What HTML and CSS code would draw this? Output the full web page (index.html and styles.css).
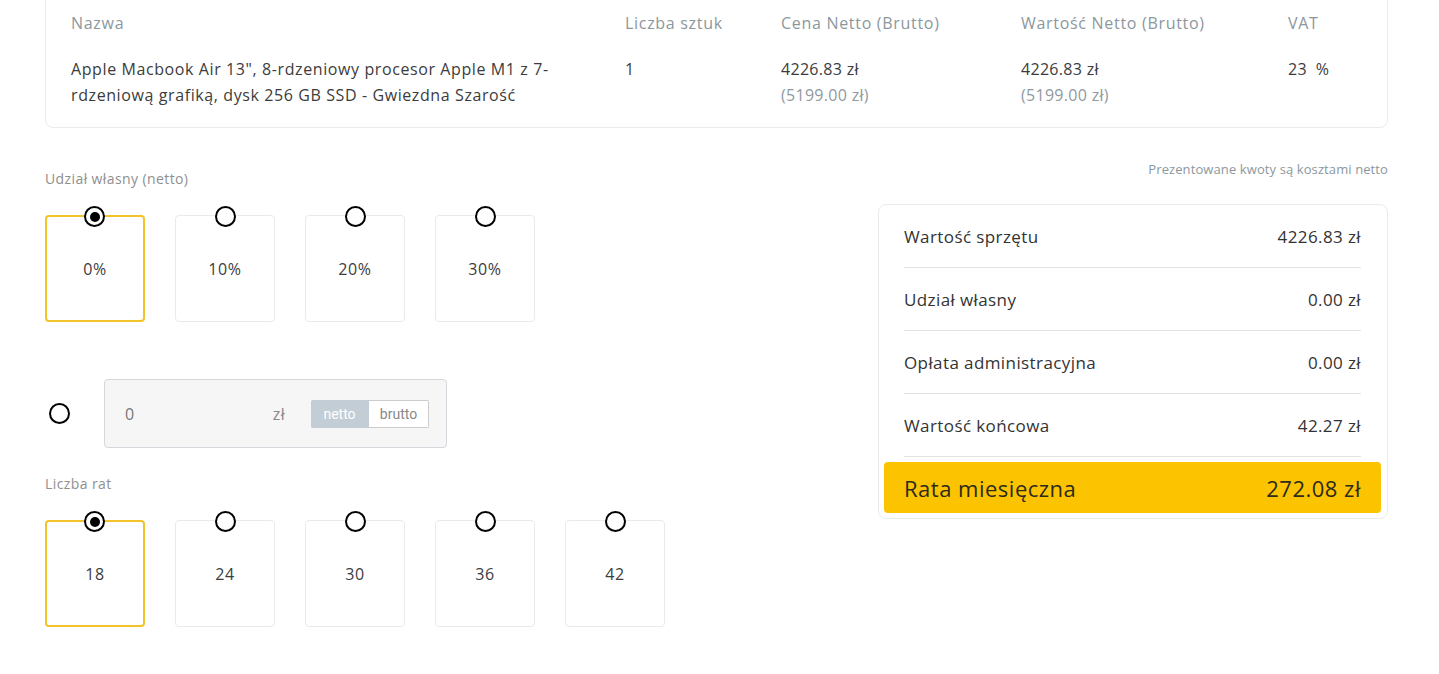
FILE: index.html
```html
<!DOCTYPE html>
<html lang="pl">
<head>
<meta charset="utf-8">
<title>Kalkulator rat</title>
<link rel="stylesheet" href="styles.css">
</head>
<body>
<div class="page">
  <div class="products">
    <div class="prow head">
      <div>Nazwa</div>
      <div>Liczba sztuk</div>
      <div>Cena Netto (Brutto)</div>
      <div>Wartość Netto (Brutto)</div>
      <div>VAT</div>
    </div>
    <div class="prow item">
      <div class="name">Apple Macbook Air 13", 8-rdzeniowy procesor Apple M1 z 7-rdzeniową grafiką, dysk 256 GB SSD - Gwiezdna Szarość</div>
      <div>1</div>
      <div>4226.83 zł<span class="sub">(5199.00 zł)</span></div>
      <div>4226.83 zł<span class="sub">(5199.00 zł)</span></div>
      <div>23&nbsp; %</div>
    </div>
  </div>

  <div class="calc">
    <div class="left">
      <div class="label">Udział własny (netto)</div>
      <div class="options">
        <div class="opt selected"><span class="radio on"></span>0%</div>
        <div class="opt"><span class="radio"></span>10%</div>
        <div class="opt"><span class="radio"></span>20%</div>
        <div class="opt"><span class="radio"></span>30%</div>
      </div>
      <div class="custom">
        <span class="radio inline"></span>
        <div class="inputbox">
          <span class="val">0</span>
          <span class="cur">zł</span>
          <div class="toggle"><span class="t active">netto</span><span class="t">brutto</span></div>
        </div>
      </div>
      <div class="label second">Liczba rat</div>
      <div class="options">
        <div class="opt selected"><span class="radio on"></span>18</div>
        <div class="opt"><span class="radio"></span>24</div>
        <div class="opt"><span class="radio"></span>30</div>
        <div class="opt"><span class="radio"></span>36</div>
        <div class="opt"><span class="radio"></span>42</div>
      </div>
    </div>
    <div class="right">
      <div class="note">Prezentowane kwoty są kosztami netto</div>
      <div class="summary">
        <div class="srow"><span>Wartość sprzętu</span><span>4226.83 zł</span></div>
        <div class="srow"><span>Udział własny</span><span>0.00 zł</span></div>
        <div class="srow"><span>Opłata administracyjna</span><span>0.00 zł</span></div>
        <div class="srow"><span>Wartość końcowa</span><span>42.27 zł</span></div>
        <div class="total"><span>Rata miesięczna</span><span>272.08 zł</span></div>
      </div>
    </div>
  </div>
</div>
</body>
</html>
```

FILE: styles.css
```css
* { box-sizing: border-box; }
html, body { margin: 0; background: #fff; }
body {
  font-family: "Open Sans", "Lato", sans-serif;
  color: #3a3a3a;
  letter-spacing: 0.3px;
  overflow: hidden;
}
.page {
  padding: 0 51px 0 45px;
}
.products {
  margin-top: -10px;
  border: 1px solid #ebebeb;
  border-radius: 8px;
  padding: 20px 25px 19px;
}
.prow {
  display: grid;
  grid-template-columns: 554px 156px 240px 267px 1fr;
  font-size: 16px;
  line-height: 26px;
}
.prow.head {
  color: #8c979d;
  line-height: 24px;
  letter-spacing: 0.7px;
}
.prow.item {
  margin-top: 21px;
  color: #3c3c3c;
}
.prow .name { max-width: 540px; letter-spacing: 0.6px; }
.sub { display: block; color: #8f9aa1; }

.calc {
  display: flex;
  justify-content: space-between;
  align-items: flex-start;
}
.left { margin-top: 41px; }
.label {
  font-size: 14px;
  line-height: 20px;
  color: #8f8f8f;
  letter-spacing: 0.4px;
}
.label.second { margin-top: 26px; }
.options {
  display: flex;
  gap: 30px;
  margin-top: 26px;
}
.opt {
  position: relative;
  width: 100px;
  height: 107px;
  border: 1px solid #eaeaea;
  border-radius: 4px;
  display: flex;
  align-items: center;
  justify-content: center;
  font-size: 16px;
  color: #3c3c3c;
  letter-spacing: 0.6px;
}
.opt.selected { border: 2px solid #f2c42a; }
.radio {
  width: 21px;
  height: 21px;
  border: 2px solid #000;
  border-radius: 50%;
  background: #fff;
  display: inline-flex;
  align-items: center;
  justify-content: center;
}
.opt .radio {
  position: absolute;
  top: -10px;
  left: 50%;
  margin-left: -10px;
}
.opt.selected .radio { top: -11px; margin-left: -11px; }
.radio.on::after {
  content: "";
  width: 10px;
  height: 10px;
  border-radius: 50%;
  background: #000;
}
.custom {
  display: flex;
  align-items: center;
  gap: 34px;
  margin-top: 57px;
  padding-left: 4px;
}
.inputbox {
  width: 343px;
  height: 69px;
  background: #f6f6f6;
  border: 1px solid #d6d6dc;
  border-radius: 4px;
  display: flex;
  align-items: center;
  padding: 0 17px 0 20px;
  font-size: 16px;
}
.inputbox .val { color: #777; flex: 1; }
.inputbox .cur { color: #888; margin-right: 26px; }
.toggle {
  display: flex;
  height: 28px;
  font-family: "Roboto", "Open Sans", sans-serif;
  font-size: 14px;
  letter-spacing: 0;
}
.toggle .t {
  display: flex;
  align-items: center;
  justify-content: center;
  background: #fff;
  color: #888;
  border: 1px solid #ccc;
  border-left: none;
  border-radius: 0 2px 2px 0;
  width: 60px;
}
.toggle .t.active {
  background: #c2cdd6;
  color: #fff;
  border-color: #c2cdd6;
  border-radius: 2px 0 0 2px;
  width: 58px;
}

.right { width: 510px; margin-top: 32px; }
.note {
  text-align: right;
  font-size: 13px;
  line-height: 18px;
  color: #8c979d;
  letter-spacing: 0.1px;
}
.summary {
  margin-top: 26px;
  border: 1px solid #ebebeb;
  border-radius: 8px;
  padding: 0 0 5px;
}
.srow {
  margin: 0 26px 0 25px;
  height: 63px;
  display: flex;
  align-items: center;
  justify-content: space-between;
  border-bottom: 1px solid #e3e3e3;
  font-size: 17px;
  color: #333;
  letter-spacing: 0.4px;
}
.total {
  margin: 5px 6px 0 5px;
  height: 51px;
  background: #fcc400;
  border-radius: 4px;
  padding: 0 20px;
  display: flex;
  align-items: center;
  justify-content: space-between;
  font-size: 22px;
  color: #2d2a1e;
  letter-spacing: 0.5px;
}
```
